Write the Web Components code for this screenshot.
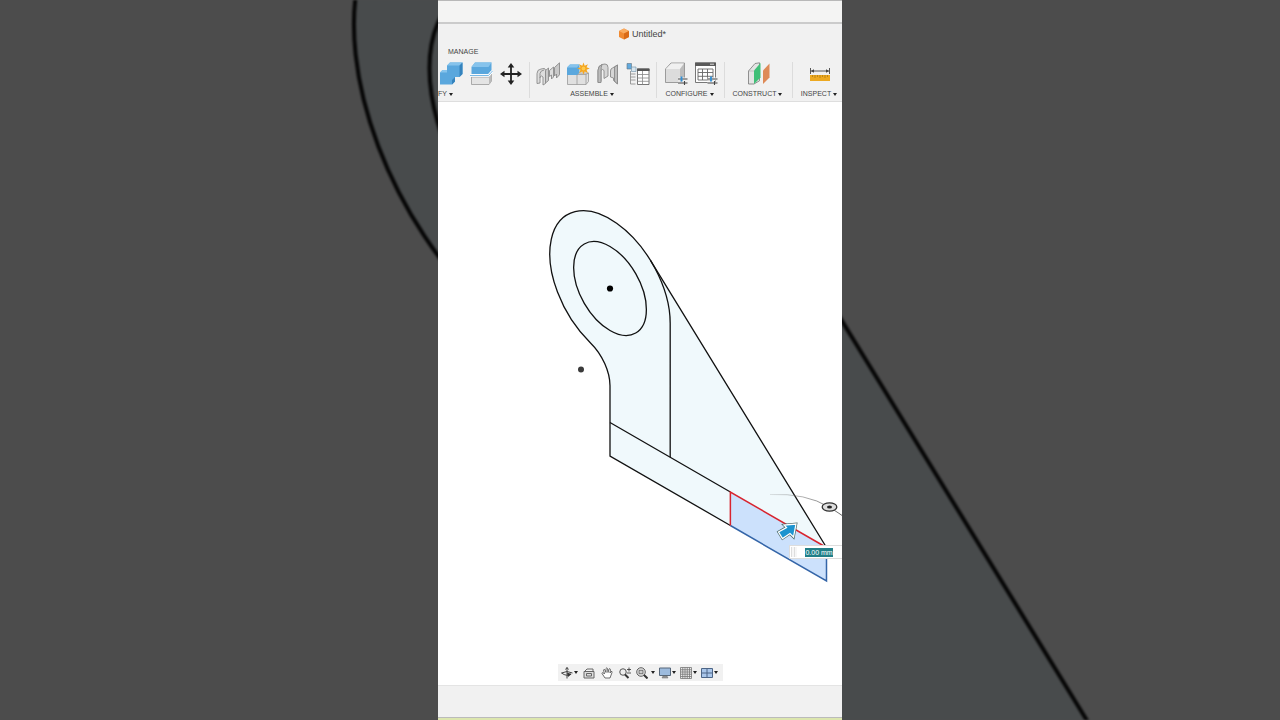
<!DOCTYPE html>
<html lang="en">
<head>
<meta charset="utf-8">
<meta name="viewport" content="width=device-width, initial-scale=1">
<title>Untitled*</title>
<style>
    body {
        margin: 0;
        background: #4c4c4c;
        color: #444;
        font-family: "Liberation Sans", Arial, sans-serif;
    }
</style>
</head>
<body>
<video-stage>
    <bracket-sketch slot="backdrop" view="438 246 404 227"></bracket-sketch>
    <cad-window></cad-window>
</video-stage>

<script>
const ICONS = {
    combine: `
        <path fill="#5aa7dd" d="M1 10.500 3.500 8H8V3.500L11 .5h12.500V12L20.500 15H16v4.500L13 22.500H1z"/>
        <path fill="#86c3ec" d="M1 10.500 3.500 8H8v2.500zM8 3.500 11 .5h12.500L20.500 3.500z"/>
        <path fill="#3583bd" d="M20.500 3.500l3-3V12l-3 3zM13 18l3-3v4.500l-3 3z"/>`,
    split: `
        <path fill="#e4e4e4" stroke="#999" stroke-width=".8" d="M2.500 15H20l2.500-3v7L20 22.500H2.500z"/>
        <path fill="#bbb" d="M20 15l2.500-3v7L20 22.500z"/>
        <path fill="#5aa7dd" d="M2.500 5 6 .5h16.500v8L19.500 12h-17z"/>
        <path fill="#86c3ec" d="M2.500 5 6 .5h16.500L19.500 5z"/>
        <path fill="none" stroke="#fff" stroke-width="2.600" d="M1 13.500h18.500L23.500 9"/>
        <path fill="none" stroke="#5aa7dd" stroke-width=".8" d="M1 13.500h18.500L23.500 9"/>`,
    move: `
        <path stroke="#222" stroke-width="1.800" d="M12 4v16M4 12h16"/>
        <path fill="#222" d="M12 1l3.300 4.500H8.700zM12 23l3.300-4.500H8.700zM1 12l4.500-3.300v6.600zM23 12l-4.500-3.300v6.600z"/>`,
    joint: `
        <g fill="#c9c9c9" stroke="#8a8a8a" stroke-width=".9">
            <path d="M18.500 5.500 23.500.8v12L20.500 16v-4l-2 2z"/>
            <path fill="#dedede" d="M13.500 8.500 17.500 5v10l-2 2v-4l-2 1.500z"/>
            <path d="M9.500 8.500 12.500 6v12.500l-3 2.500z"/>
            <path fill="#dedede" d="M1 21.500V11.500q0-4 4-4.500l3-.5q1.500 0 1.500 2v13l-2.500 1.500v-8q-1.500-2-3 0v6z"/>
            <path fill="none" d="M4 16v-4.500q.5-3 4-3.500"/>
        </g>`,
    component: `
        <path fill="#e0e0e0" stroke="#999" stroke-width=".8" d="M11 12.500 13 11h9.500v8.500L20 22.500H1.500V12.500z"/>
        <path fill="none" stroke="#999" stroke-width=".8" d="M11 12.500v10M11 12.500h9v10M20 12.500l2.500-1.500"/>
        <path fill="#5aa7dd" d="M1 5.500 4 2.500h9.500v8L11 13H1z"/>
        <path fill="#86c3ec" d="M1 5.500 4 2.500h9.500L11 5.500z"/>
        <path fill="#f4a51e" d="M17.500.5l1.200 3.200 3.200-1.500L20.500 5.300l3.300 1.200-3.300 1.200 1.400 3.200-3.200-1.500-1.200 3.200-1.200-3.200-3.200 1.500 1.400-3.200-3.300-1.200 3.300-1.200-1.400-3.100 3.200 1.500z"/>
        <circle cx="17.500" cy="6.500" r="1.900" fill="#ffc94a"/>`,
    asbuilt: `
        <g fill="#d6d6d6" stroke="#8a8a8a" stroke-width=".9">
            <path d="M2 20.500V8.500q0-5 4-6l3-.5q3 0 3 3.500v8.500l-4 2.500v-8q-1.500-2-3 0v11z"/>
            <path fill="#bdbdbd" d="M2 20.500V8.500q0-4.500 4-6Q5 5 5 9v11.500z"/>
            <path d="M14.500 9q0-2.500 2-3L21.500 3v19l-4-3.500v-2.500l-3-1z"/>
            <path fill="#bdbdbd" d="M18.500 5 21.500 3v19l-3-3z"/>
        </g>`,
    bom: `
        <path fill="none" stroke="#888" stroke-width=".8" d="M4.500 9v13M4.500 12h5M4.500 15h5M4.500 18h5M4.500 22h5"/>
        <path fill="#62aade" stroke="#62737f" stroke-width=".6" d="M1 1.500h4.500V7H1z"/>
        <path fill="#d9e6ee" stroke="#6a8da5" stroke-width=".6" d="M5.500 5h4.500v4.500H5.500z"/>
        <path fill="#fff" stroke="#666" stroke-width=".9" d="M11.500 7h11.500v15.500H11.500z"/>
        <path fill="#555" d="M11 6.500h12.500V9H11z"/>
        <path stroke="#888" stroke-width=".8" d="M11.500 12.500h11.500M11.500 16h11.500M11.500 19.300h11.500M16.500 9v13.500"/>`,
    configure: `
        <path fill="#dcdcdc" stroke="#888" stroke-width=".8" d="M1.500 7 7 1h13.500v15L16.500 20.500h-15z"/>
        <path fill="#f0f0f0" d="M2 7l5.300-5.600h12.500L16 7z"/>
        <path fill="#bcbcbc" d="M16 7l4-5.300V16l-4 4z"/>
        <path stroke="#f1f1f1" stroke-width="3" d="M14 17h9.500M14 21h9.500"/>
        <path stroke="#444" stroke-width="1.100" d="M14 17h9.500M14 21h9.500M20.500 19v4"/>
        <path stroke="#2f8fd6" stroke-width="1.800" d="M17.500 14.500v5"/>`,
    table: `
        <path fill="#fff" stroke="#777" d="M1.500 1h20v19.500h-20z"/>
        <path fill="#5a5a5a" d="M1 .5h21V4H1z"/>
        <path stroke="#fff" stroke-width=".8" d="M16 2.200h4"/>
        <path fill="none" stroke="#666" stroke-width=".9" d="M4 7h15v11H4zM4 10.500h15M4 14.300h15M8.500 7v11M13.500 7v11"/>
        <path stroke="#f1f1f1" stroke-width="3" d="M13.500 17h10M13.500 21h10"/>
        <path stroke="#444" stroke-width="1.100" d="M13.500 17h10M13.500 21h10M20.500 19v4"/>
        <path stroke="#2f8fd6" stroke-width="1.800" d="M17 14.500v5"/>`,
    plane: `
        <path fill="#e4e4e4" stroke="#777" stroke-width=".8" d="M1.500 9 8 1.500 12.500.8v18L7 22H1.500z"/>
        <path fill="none" stroke="#aaa" stroke-width=".6" d="M1.500 9H7"/>
        <path fill="#3fbf77" d="M7 8.500 13.500 1v14.500L7 22z"/>
        <path fill="#de8a57" d="M16 8.500 22.500 1.500v14L16 22z"/>`,
    measure: `
        <path fill="#eda921" d="M2 13h20v6H2z"/>
        <path stroke="#a87613" stroke-width=".7" d="M4.500 13v2M7 13v3M9.500 13v2M12 13v3M14.500 13v2M17 13v3M19.500 13v2"/>
        <path stroke="#444" stroke-width=".9" d="M2.500 6v6M21.500 6v6M3 9h18"/>
        <path fill="#444" d="M3 9l3-1.700v3.400zM21 9l-3-1.700v3.400z"/>`,
    document: `
        <path fill="#f08a32" d="M12 1l10 5v12l-10 5L2 18V6z"/>
        <path fill="#f9ac62" d="M12 1l10 5-10 5L2 6z"/>
        <path fill="#d96b18" d="M22 6v12l-10 5V11z"/>`,
    orbit: `
        <g fill="none" stroke="#444" stroke-width="2">
            <path d="M12 1v22M9 5l3-4 3 4M1 12q11-6 22 0M1 12q11 8 19 2"/>
        </g>
        <path fill="#333" d="M12 11l9 3-7 6z"/>`,
    look: `
        <path fill="#ddd" stroke="#666" stroke-width="2" d="M2 9h20v13H2z"/>
        <path fill="none" stroke="#666" stroke-width="2" d="M4 8l4-4h12v4M7 13h10v5H7z"/>`,
    pan: `
        <path fill="#fff" stroke="#555" stroke-width="1.700" d="M8 22 2 13q0-3 3-1l2 2L5 6q1-3 3 0l2 5V3q2-3 3 0l1 8 2-7q2-2 3 1l-1 7 2-3q3-1 2 2l-4 11z"/>`,
    zoom: `
        <circle cx="8" cy="10" r="6.500" fill="#eee" stroke="#555" stroke-width="2"/>
        <path stroke="#333" stroke-width="4" d="M12 15l7 7"/>
        <path stroke="#444" stroke-width="1.800" d="M16 5h8M20 1v8M16 12h8"/>`,
    fit: `
        <circle cx="10" cy="10" r="8.500" fill="#eee" stroke="#555" stroke-width="2"/>
        <path fill="#ccc" stroke="#555" stroke-width="1.600" d="M6 6.500h8v7H6z"/>
        <path stroke="#333" stroke-width="4" d="M16 16l7 7"/>`,
    display: `
        <path fill="#9dbbdd" stroke="#56677a" stroke-width="2" d="M1 2h22v15H1z"/>
        <path fill="#999" stroke="#666" d="M8 18h8l2 4H6z"/>`,
    grid: `
        <path fill="#eee" stroke="#777" stroke-width="1.600" d="M1 1h22v22H1zM1 5.500h22M1 10h22M1 14.500h22M1 19h22M5.500 1v22M10 1v22M14.500 1v22M19 1v22"/>`,
    viewports: `
        <path fill="#a9c6ea" stroke="#4c6587" stroke-width="2" d="M1 3h22v18H1zM12 3v18M1 12h22"/>`
};

class VideoStage extends HTMLElement {
    constructor() {
        super();
        this.attachShadow({ mode: "open" });

        this.shadowRoot.innerHTML = `
            <style>
                :host {
                    display: grid;
                    grid-template: 100vh / 100%;
                    justify-items: center;
                    overflow: hidden;
                }
                .backdrop, ::slotted(:not([slot])) {
                    grid-area: 1 / 1;
                }
                .backdrop {
                    width: 100%;
                    height: 100%;
                    background: #fff;
                    filter: brightness(0.3) blur(1px);
                    --ink-width: 4px;
                }
                ::slotted(:not([slot])) {
                    position: relative;
                    height: 100%;
                    aspect-ratio: 101 / 180;
                }
            </style>
            <div class="backdrop" aria-hidden="true"><slot name="backdrop"></slot></div>
            <slot></slot>
        `;
    }
}

// The profile is drawn flat, then the group's matrix puts it on the isometric plane.
class BracketSketch extends HTMLElement {
    constructor() {
        super();
        this.attachShadow({ mode: "open" });
    }

    connectedCallback() {
        this.shadowRoot.innerHTML = `
            <style>
                :host {
                    display: block;
                    width: 100%;
                    height: 100%;
                }
                svg {
                    display: block;
                    width: 100%;
                    height: 100%;
                }
                .plane path, .plane circle {
                    fill: none;
                    stroke: #111;
                    stroke-width: var(--ink-width, 1.3px);
                    vector-effect: non-scaling-stroke;
                }
                .plane .face { fill: #f0f9fc; stroke: none; }
                .plane .selected { fill: #cce1fc; stroke: none; }
                .plane .red { stroke: #d8242f; stroke-width: 1.5px; }
                .plane .blue { stroke: #3465a8; stroke-width: 1.5px; }
            </style>
            <svg viewBox="${this.getAttribute("view")}" preserveAspectRatio="xMidYMid slice">
                <defs>
                    <linearGradient id="fade">
                        <stop offset="0" stop-color="#777" stop-opacity=".2"/>
                        <stop offset="1" stop-color="#555"/>
                    </linearGradient>
                </defs>
                <g class="plane" transform="matrix(.866 .5 0 1 610 288.500)">
                    <path class="face" d="M0 167.500V97.700A33.500 33.500 0 0 0-22.500 65.700A69.500 69.500 0 1 1 46.900-51.300L250 134V167.500z"/>
                    <path class="selected" d="M139 134H250V167.500H139z"/>
                    <path d="M139 167.500H0V97.700A33.500 33.500 0 0 0-22.500 65.700A69.500 69.500 0 1 1 69.500 0V134"/>
                    <path d="M46.900-51.300 250 134M0 134H139"/>
                    <circle r="42"/>
                    <path class="blue" d="M139 167.500H250V134"/>
                    <path class="red" d="M139 167.500V134H250"/>
                </g>
                <circle cx="610" cy="288.500" r="3.100"/>
                <circle cx="581" cy="369.500" r="3" fill="#3a3a3a"/>
                <path d="M770 494.500Q806 493 829 507T850 524" fill="none" stroke="url(#fade)"/>
                <ellipse cx="829.500" cy="507" rx="7.300" ry="4.200" fill="#ddd" stroke="#333" stroke-width="1.300"/>
                <ellipse cx="829.500" cy="507" rx="2.500" ry="1.500" fill="#222"/>
                <g fill="#1b93cf">
                    <path d="M796 524 793.500 537 790 533.500 782.500 538.500 778.500 532 786.500 527.500 784 525z" stroke="#466" stroke-width="2.600"/>
                    <path d="M796 524 793.500 537 790 533.500 782.500 538.500 778.500 532 786.500 527.500 784 525z" stroke="#fff" stroke-width="1.300"/>
                </g>
            </svg>
        `;
    }
}

class ToolIcon extends HTMLElement {
    constructor() {
        super();
        this.attachShadow({ mode: "open" });
    }

    connectedCallback() {
        this.shadowRoot.innerHTML = `
            <style>
                :host {
                    display: block;
                    flex: none;
                    width: var(--icon-size, 24px);
                    height: var(--icon-size, 24px);
                }
                svg { display: block; }
            </style>
            <svg width="100%" height="100%" viewBox="0 0 24 24" aria-hidden="true">${ICONS[this.getAttribute("name")]}</svg>
        `;
    }
}

class ToolGroup extends HTMLElement {
    constructor() {
        super();
        this.attachShadow({ mode: "open" });
    }

    connectedCallback() {
        const icons = this.getAttribute("icons").split(" ");

        this.shadowRoot.innerHTML = `
            <style>
                :host {
                    display: flex;
                    flex: none;
                    flex-direction: column;
                    box-sizing: border-box;
                    height: 36px;
                    border-right: 1px solid #dcdcdc;
                }
                button {
                    display: block;
                    padding: 0;
                    border: 0;
                    background: none;
                    color: inherit;
                    font: inherit;
                }
                .icons {
                    display: flex;
                    justify-content: center;
                    gap: 6px;
                    padding-right: var(--icons-inset, 0);
                }
                .label {
                    display: flex;
                    align-items: center;
                    justify-content: var(--label-align, center);
                    gap: 2px;
                    margin-top: 3px;
                    padding-right: 2px;
                    font-size: 7px;
                    line-height: 10px;
                    white-space: nowrap;
                }
                .label::after {
                    content: "";
                    border: 2px solid transparent;
                    border-top: 3px solid #222;
                    border-bottom: 0;
                }
            </style>
            <div class="icons">
                ${icons.map(name => `<button type="button" aria-label="${name}"><tool-icon name="${name}"></tool-icon></button>`).join("")}
            </div>
            <button class="label" type="button">${this.getAttribute("label")}</button>
        `;
    }
}

class NavButton extends HTMLElement {
    constructor() {
        super();
        this.attachShadow({ mode: "open" });
    }

    connectedCallback() {
        const name = this.getAttribute("name");

        this.shadowRoot.innerHTML = `
            <style>
                :host { display: block; --icon-size: 12px; }
                button {
                    display: flex;
                    align-items: center;
                    gap: 3px;
                    padding: 0 1px;
                    border: 0;
                    background: none;
                }
                :host([menu]) button { padding: 0; }
                :host([menu="tight"]) button { gap: 1px; }
                :host([menu]) button::after {
                    content: "";
                    border: 2px solid transparent;
                    border-top: 3px solid #222;
                    border-bottom: 0;
                }
            </style>
            <button type="button" aria-label="${name}"><tool-icon name="${name}"></tool-icon></button>
        `;
    }
}

class CadWindow extends HTMLElement {
    constructor() {
        super();
        this.attachShadow({ mode: "open" });

        this.shadowRoot.innerHTML = `
            <style>
                :host {
                    display: flex;
                    flex-direction: column;
                    box-sizing: border-box;
                    overflow: hidden;
                    background: #f1f1f1;
                    border-top: 1px solid #b8b8b8;
                }
                .titlebar {
                    height: 21px;
                    background: #f4f4f3;
                    border-bottom: 2px solid #cbcbcb;
                }
                .document {
                    display: flex;
                    align-items: center;
                    justify-content: center;
                    gap: 2px;
                    padding: 3px 0 6px 4px;
                    font-size: 9px;
                    line-height: 14px;
                    --icon-size: 12px;
                }
                .tabs {
                    padding-left: 10px;
                    font-size: 7px;
                    line-height: 10px;
                }
                .tabs a { color: inherit; text-decoration: none; }
                .toolbar {
                    display: flex;
                    padding: 5px 0 3px;
                    border-bottom: 1px solid #dedede;
                }
                .modify { width: 92px; --label-align: flex-start; --icons-inset: 6px; }
                .assemble { width: 127px; }
                .configure, .construct { width: 68px; }
                .inspect { width: 55px; }
                .canvas {
                    position: relative;
                    display: grid;
                    flex: 1;
                    min-height: 0;
                    grid-template: minmax(0, 1fr) / 100%;
                    background: #fff;
                }
                .canvas > bracket-sketch, nav { grid-area: 1 / 1; }
                nav {
                    display: flex;
                    align-items: center;
                    align-self: end;
                    justify-self: center;
                    gap: 4px;
                    height: 17px;
                    margin-bottom: 4px;
                    padding: 0 5px 0 3px;
                    background: #f1f1f1;
                    z-index: 1;
                }
                .dimension {
                    position: absolute;
                    left: 87%;
                    top: 76%;
                    right: 0;
                    display: flex;
                    align-items: center;
                    height: 14px;
                    box-sizing: border-box;
                    border: 1px solid #ddd;
                    border-right: 0;
                    background: #fff;
                }
                .grip {
                    width: 6px;
                    height: 10px;
                    margin: 0 8px 0 1px;
                    background: repeating-linear-gradient(90deg, #ddd 0 1px, #f6f6f6 1px 3px);
                }
                input {
                    width: 28px;
                    height: 9px;
                    padding: 0;
                    border: 0;
                    background: #217f88;
                    color: #fff;
                    font: 7px/9px "Liberation Sans", Arial, sans-serif;
                }
                footer {
                    height: 31px;
                    border-top: 1px solid #e4e4e4;
                    border-bottom: 1px solid #bbb;
                }
                .strip { height: 2px; background: #dce6ae; }
            </style>
            <div class="titlebar"></div>
            <div class="document"><tool-icon name="document"></tool-icon>Untitled*</div>
            <div class="tabs"><a href="#manage">MANAGE</a></div>
            <div class="toolbar">
                <tool-group class="modify" label="FY" icons="combine split move"></tool-group>
                <tool-group class="assemble" label="ASSEMBLE" icons="joint component asbuilt bom"></tool-group>
                <tool-group class="configure" label="CONFIGURE" icons="configure table"></tool-group>
                <tool-group class="construct" label="CONSTRUCT" icons="plane"></tool-group>
                <tool-group class="inspect" label="INSPECT" icons="measure"></tool-group>
            </div>
            <div class="canvas">
                <bracket-sketch view="438 102 404 583"></bracket-sketch>
                <div class="dimension">
                    <span class="grip"></span>
                    <input type="text" value="0.00 mm" aria-label="Distance">
                </div>
                <nav>
                    <nav-button name="orbit" menu="tight"></nav-button>
                    <nav-button name="look"></nav-button>
                    <nav-button name="pan"></nav-button>
                    <nav-button name="zoom"></nav-button>
                    <nav-button name="fit" menu></nav-button>
                    <nav-button name="display" menu="tight"></nav-button>
                    <nav-button name="grid" menu="tight"></nav-button>
                    <nav-button name="viewports" menu="tight"></nav-button>
                </nav>
            </div>
            <footer></footer>
            <div class="strip"></div>
        `;
    }
}

customElements.define("video-stage", VideoStage);
customElements.define("bracket-sketch", BracketSketch);
customElements.define("tool-icon", ToolIcon);
customElements.define("tool-group", ToolGroup);
customElements.define("nav-button", NavButton);
customElements.define("cad-window", CadWindow);
</script>
</body>
</html>
